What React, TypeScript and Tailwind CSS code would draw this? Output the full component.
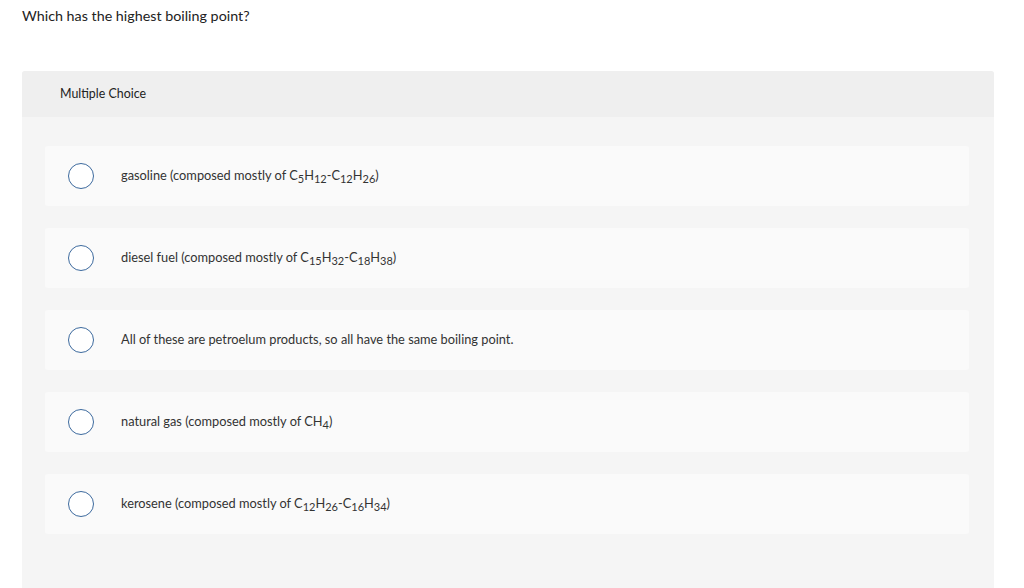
import React from 'react';

const options: React.ReactNode[] = [
  <>gasoline (composed mostly of C<sub>5</sub>H<sub>12</sub>-C<sub>12</sub>H<sub>26</sub>)</>,
  <>diesel fuel (composed mostly of C<sub>15</sub>H<sub>32</sub>-C<sub>18</sub>H<sub>38</sub>)</>,
  <>All of these are petroelum products, so all have the same boiling point.</>,
  <>natural gas (composed mostly of CH<sub>4</sub>)</>,
  <>kerosene (composed mostly of C<sub>12</sub>H<sub>26</sub>-C<sub>16</sub>H<sub>34</sub>)</>,
];

const App: React.FC = () => {
  return (
    <div className="h-[588px] w-[1024px] overflow-hidden bg-white text-[#333] font-['Lato','Open_Sans',sans-serif]">
      <div className="px-[22px] pt-[6px] text-[14.3px] leading-[20px] text-[#222]">
        Which has the highest boiling point?
      </div>

      <div className="mx-[22px] mr-[30px] mt-[45px] rounded-[3px] bg-[#f5f5f5]">
        <div className="flex h-[46px] items-center rounded-t-[3px] bg-[#efefef] px-[38px] text-[12.4px] text-[#222]">
          Multiple Choice
        </div>
        <div className="flex flex-col gap-[22px] pb-[60px] pl-[23px] pr-[25px] pt-[29px]">
          {options.map((opt, i) => (
            <div key={i} className="flex h-[60px] items-center rounded-[3px] bg-[#fafafa] pl-[23px]">
              <span className="h-[26px] w-[26px] shrink-0 rounded-full border border-[#3d6a9e] bg-white" />
              <span className="ml-[27px] text-[12.8px] text-[#333] [&_sub]:text-[11px] [&_sub]:-bottom-[0.25em] [&_sub]:leading-none">
                {opt}
              </span>
            </div>
          ))}
        </div>
      </div>
    </div>
  );
};

export default App;
